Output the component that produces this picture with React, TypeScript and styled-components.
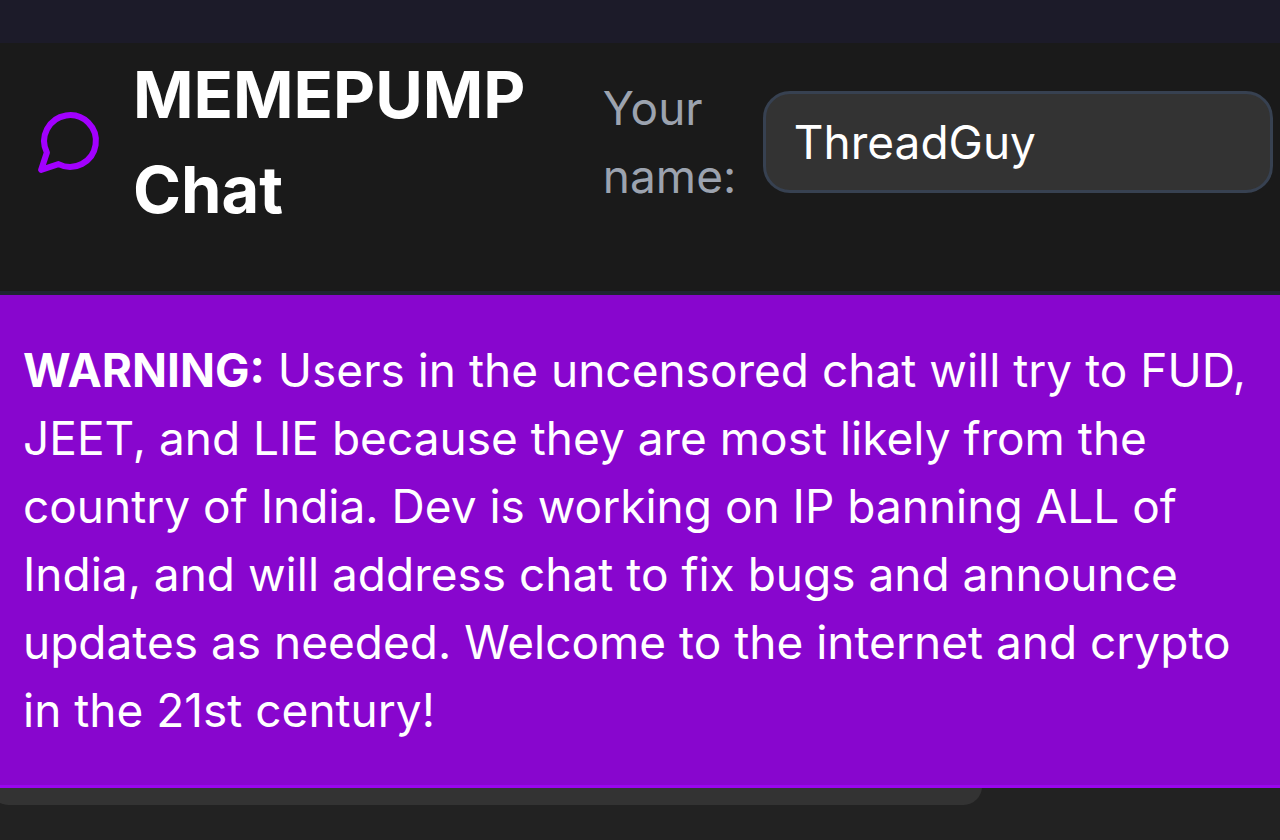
import React, { useState } from "react";
import styled, { createGlobalStyle } from "styled-components";

const GlobalStyle = createGlobalStyle`
  * { box-sizing: border-box; }
  body {
    margin: 0;
    background: #222222;
    color: #ffffff;
    font-family: Inter, "Liberation Sans", sans-serif;
  }
`;

const Page = styled.div`
  min-height: 100vh;
`;

const TopStrip = styled.div`
  height: 43px;
  background: #1c1b29;
`;

const Header = styled.header`
  display: flex;
  align-items: flex-start;
  padding: 4px 7px 54px 32px;
  background: #1a1a1a;
  border-bottom: 4px solid #1f2433;
`;

const Brand = styled.div`
  display: flex;
  align-items: center;
  flex: none;
  width: 46%;
  gap: 28px;
`;

const BrandIcon = styled.svg`
  flex: none;
  width: 73px;
  height: 73px;
  fill: none;
  stroke: #a200ff;
  stroke-width: 2;
  stroke-linecap: round;
  stroke-linejoin: round;
`;

const Title = styled.h1`
  margin: 0;
  font-size: 65px;
  font-weight: 700;
  line-height: 95px;
`;

const NameForm = styled.form`
  display: flex;
  align-items: center;
  flex: 1;
  min-width: 0;
  gap: 28px;
  padding-top: 27px;
`;

const NameLabel = styled.label`
  flex: none;
  width: 132px;
  color: #9ca3af;
  font-size: 46px;
  line-height: 68px;
`;

const NameInput = styled.input`
  flex: 1;
  min-width: 0;
  height: 102px;
  padding: 0 28px;
  border: 3px solid #374151;
  border-radius: 27px;
  background: #333333;
  color: #ffffff;
  font: inherit;
  font-size: 46px;
  outline: none;
`;

const Warning = styled.p`
  margin: 0;
  padding: 41px 12px 41px 23px;
  background: #8806ce;
  border-bottom: 3px solid #9a06ee;
  font-size: 46px;
  line-height: 68px;
`;

const WarningLead = styled.strong`
  font-weight: 700;
`;

const Messages = styled.div`
  overflow: hidden;
`;

const Bubble = styled.div`
  width: 992px;
  max-width: 100%;
  height: 37px;
  margin: -20px 0 0 -10px;
  background: #333333;
  border-radius: 27px;
`;

export default function App() {
  const [name, setName] = useState("ThreadGuy");
  return (
    <Page>
      <GlobalStyle />
      <TopStrip />
      <Header>
        <Brand>
          <BrandIcon viewBox="0 0 24 24" aria-hidden="true">
            <path d="m3 21 1.9-5.7a8.5 8.5 0 1 1 3.8 3.8z" />
          </BrandIcon>
          <Title>MEMEPUMP Chat</Title>
        </Brand>
        <NameForm>
          <NameLabel htmlFor="name">Your name:</NameLabel>
          <NameInput id="name" value={name} onChange={(e) => setName(e.target.value)} />
        </NameForm>
      </Header>
      <Warning>
        <WarningLead>WARNING:</WarningLead> Users in the uncensored chat will try to FUD, JEET, and
        LIE because they are most likely from the country of India. Dev is working on IP banning ALL
        of India, and will address chat to fix bugs and announce updates as needed. Welcome to the
        internet and crypto in the 21st century!
      </Warning>
      <Messages>
        <Bubble />
      </Messages>
    </Page>
  );
}
